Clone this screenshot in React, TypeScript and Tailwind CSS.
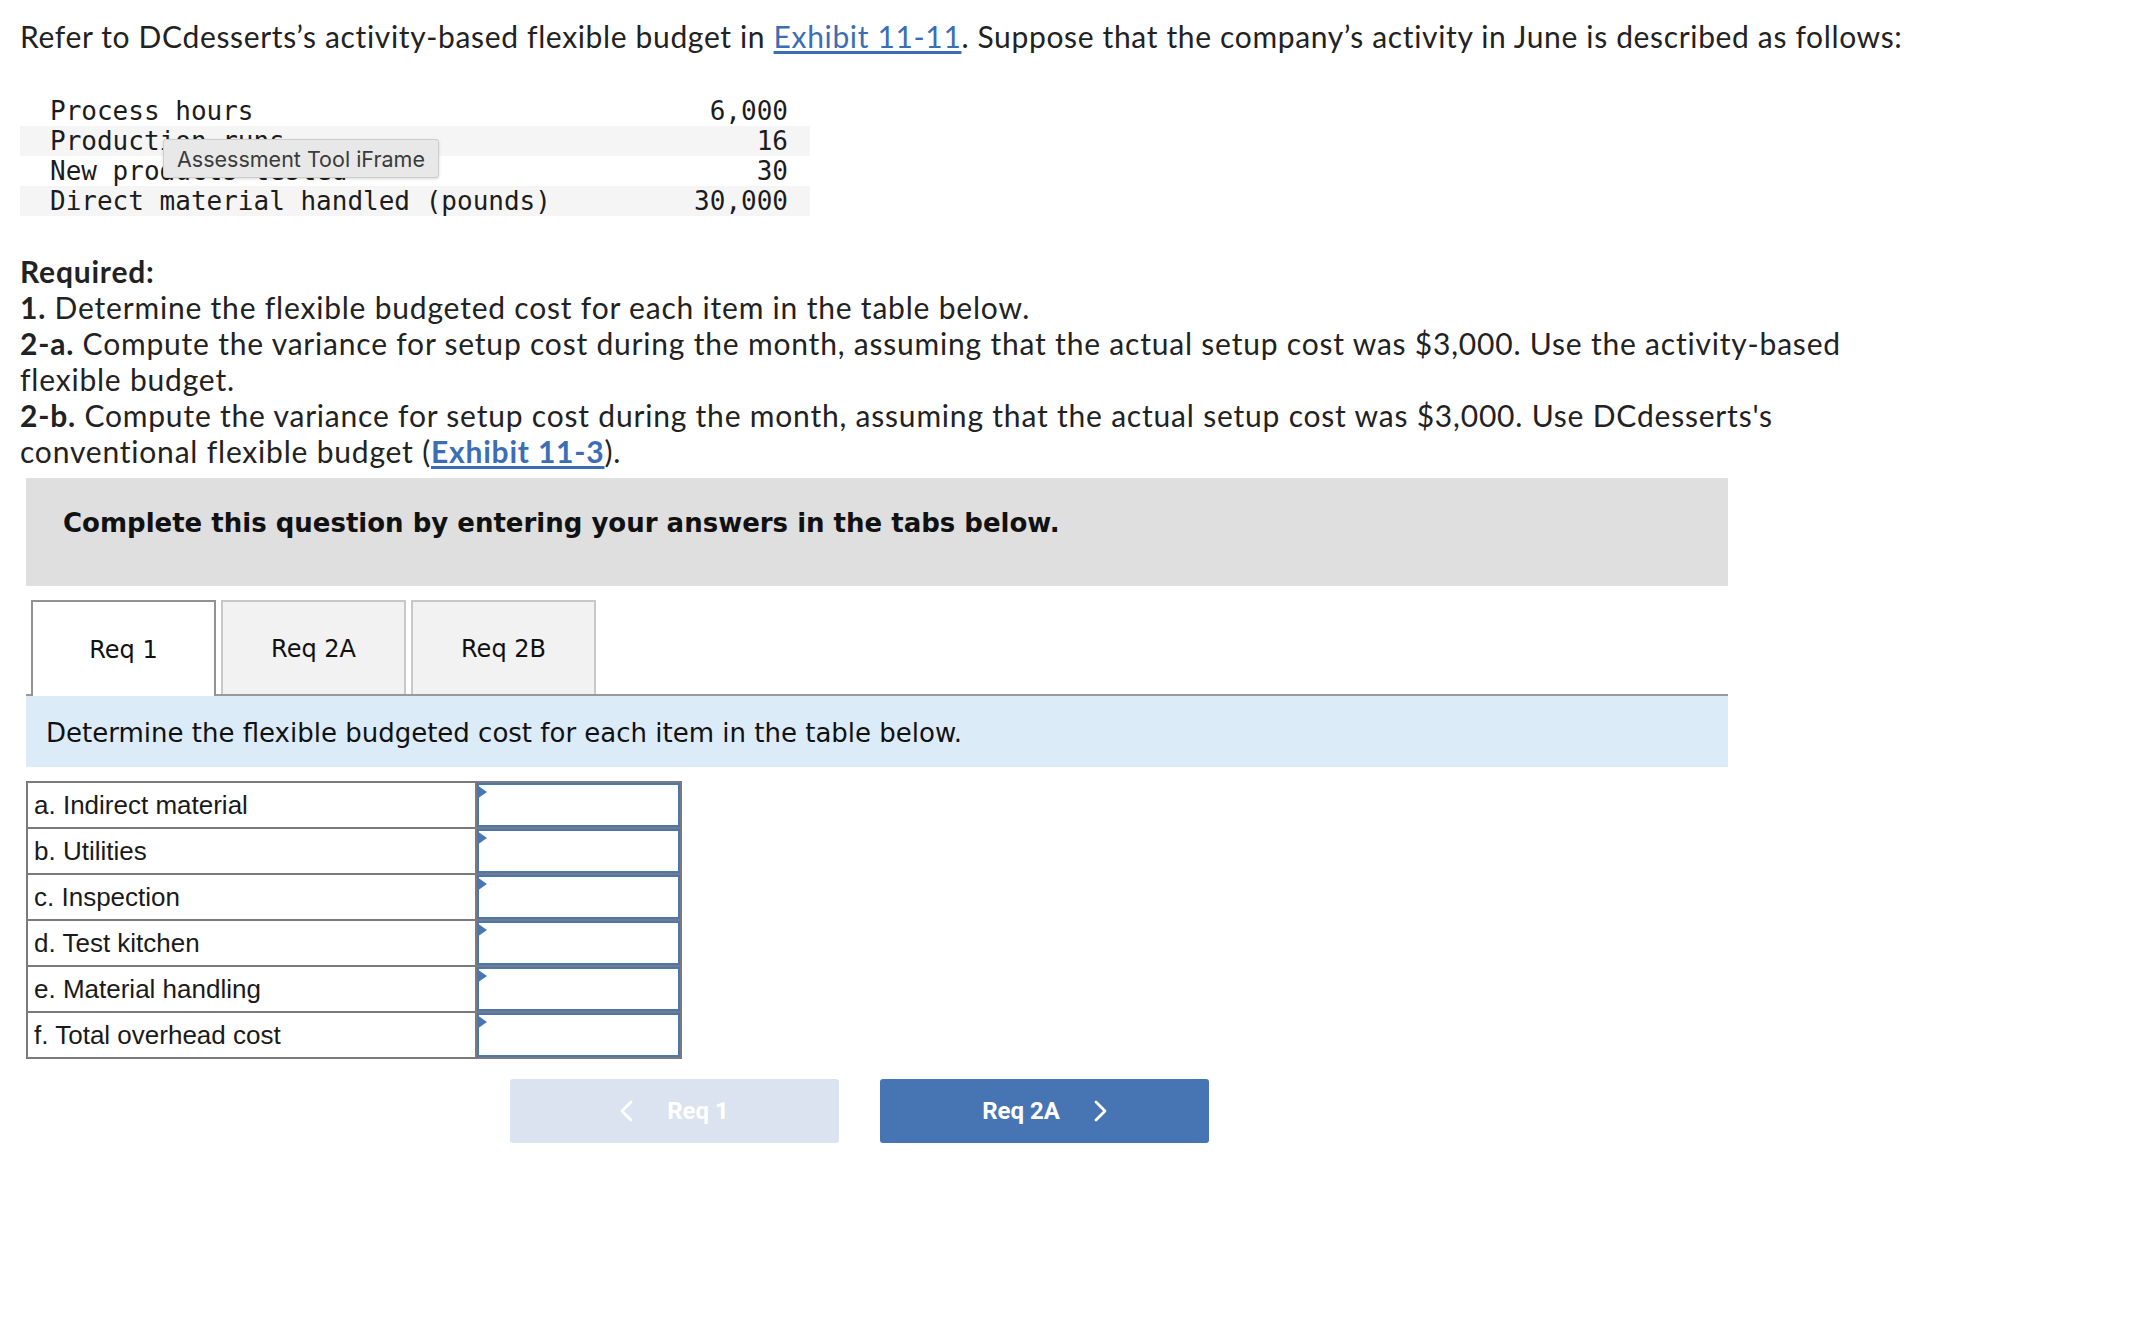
import React from "react";

const activity = [
  { label: "Process hours", value: "6,000" },
  { label: "Production runs", value: "16" },
  { label: "New products tested", value: "30" },
  { label: "Direct material handled (pounds)", value: "30,000" },
];

const items = [
  "a. Indirect material",
  "b. Utilities",
  "c. Inspection",
  "d. Test kitchen",
  "e. Material handling",
  "f. Total overhead cost",
];

const tabs = ["Req 1", "Req 2A", "Req 2B"];

function Chevron({ dir }: { dir: "left" | "right" }) {
  return (
    <svg width="13" height="22" viewBox="0 0 13 22" fill="none">
      <polyline
        points={dir === "left" ? "11,2 2,11 11,20" : "2,2 11,11 2,20"}
        stroke="white"
        strokeWidth="2.8"
        strokeLinecap="round"
        strokeLinejoin="round"
      />
    </svg>
  );
}

export default function App() {
  return (
    <div className="min-h-[1334px] bg-white text-[#222] font-[Lato,sans-serif]">
      <div className="w-[2100px] pl-[20px] pt-[18px]">
        <p className="text-[30px] leading-[36px] tracking-[0.65px]">
          Refer to DCdesserts’s activity-based flexible budget in{" "}
          <a className="text-[#3b6eb5] underline underline-offset-[3px]">Exhibit 11-11</a>. Suppose that
          the company’s activity in June is described as follows:
        </p>

        <div className="relative mt-[42px] w-[790px] font-['DejaVu_Sans_Mono',monospace] text-[26px] leading-[30px] text-[#1c1c1c]">
          {activity.map((row, i) => (
            <div
              key={row.label}
              className={`flex h-[30px] justify-between pl-[30px] pr-[22px] ${
                i % 2 === 1 ? "bg-[#f5f5f5]" : ""
              }`}
            >
              <span>{row.label}</span>
              <span>{row.value}</span>
            </div>
          ))}
          <div className="absolute left-[143px] top-[43px] flex h-[39px] items-center rounded-[3px] border border-[#cdcdcd] bg-[#e8e8e8] px-[13px] font-[Inter,sans-serif] text-[21.5px] text-[#3a3a3a] shadow-[0_1px_3px_rgba(0,0,0,0.15)]">
            Assessment Tool iFrame
          </div>
        </div>

        <div className="mt-[37px] text-[30px] leading-[36px] tracking-[0.8px]">
          <p className="font-bold">Required:</p>
          <p>
            <b>1.</b> Determine the flexible budgeted cost for each item in the table below.
          </p>
          <p>
            <b>2-a.</b> Compute the variance for setup cost during the month, assuming that the actual
            setup cost was $3,000. Use the activity-based
            <br />
            flexible budget.
          </p>
          <p>
            <b>2-b.</b> Compute the variance for setup cost during the month, assuming that the actual
            setup cost was $3,000. Use DCdesserts's
            <br />
            conventional flexible budget (
            <a className="font-bold text-[#3b6eb5] underline underline-offset-[3px]">Exhibit 11-3</a>).
          </p>
        </div>
      </div>

      <div className="ml-[26px] mt-[9px] w-[1702px] font-['DejaVu_Sans',Verdana,sans-serif] text-[#111]">
        <div className="h-[108px] bg-[#dfdfdf] pl-[37px] pt-[30px] text-[26px] font-bold leading-[30px]">
          Complete this question by entering your answers in the tabs below.
        </div>

        <div className="mt-[14px] flex h-[96px] gap-[5px] border-b-2 border-[#999] pl-[5px]">
          {tabs.map((t, i) => (
            <div
              key={t}
              className={`flex w-[185px] items-center justify-center pt-[2px] text-[24px] ${
                i === 0
                  ? "relative -mb-[2px] h-[96px] border-2 border-b-0 border-[#929292] bg-white"
                  : "h-[94px] border-2 border-b-0 border-[#c8c8c8] bg-[#f2f2f2]"
              }`}
            >
              {t}
            </div>
          ))}
        </div>

        <div className="flex h-[71px] items-center bg-[#dcebf8] pl-[20px] pt-[3px] text-[26px]">
          Determine the flexible budgeted cost for each item in the table below.
        </div>

        <div className="mt-[14px] w-[656px] border-2 border-[#7b7b7b] font-['Liberation_Sans',Arial,sans-serif] text-[26px] text-[#1a1a1a]">
          {items.map((label, i) => (
            <div
              key={label}
              className={`flex ${i > 0 ? "h-[46px] border-t-2 border-[#7b7b7b]" : "h-[44px]"}`}
            >
              <div className="flex w-[449px] items-center border-r-2 border-[#7b7b7b] pl-[6px]">{label}</div>
              <div className="relative flex-1 border-2 border-[#4a77b4] bg-white">
                <span className="absolute -left-[2px] top-0 h-0 w-0 border-y-[7px] border-l-[10px] border-y-transparent border-l-[#4a77b4]" />
              </div>
            </div>
          ))}
        </div>
      </div>

      <div className="ml-[510px] mt-[20px] flex gap-[41px] font-[Roboto,sans-serif] text-[24px] font-bold text-white">
        <div className="flex h-[64px] w-[329px] items-center justify-center gap-[34px] rounded-[3px] bg-[#dae3ef]">
          <Chevron dir="left" />
          <span>Req 1</span>
        </div>
        <div className="flex h-[64px] w-[329px] items-center justify-center gap-[34px] rounded-[3px] bg-[#4775b3]">
          <span>Req 2A</span>
          <Chevron dir="right" />
        </div>
      </div>
    </div>
  );
}
